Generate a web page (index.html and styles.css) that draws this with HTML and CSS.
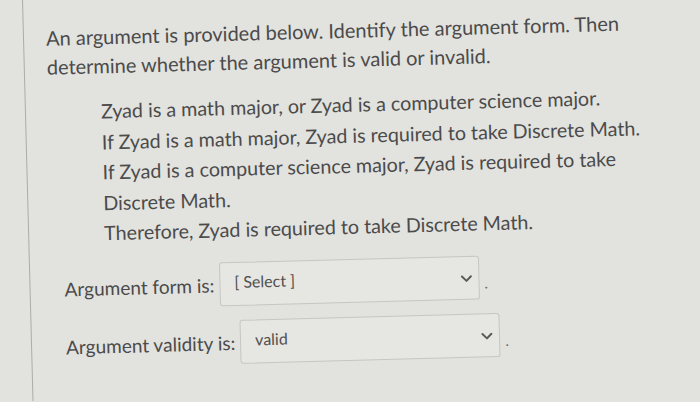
FILE: index.html
```html
<!DOCTYPE html>
<html>
<head>
<meta charset="utf-8">
<link rel="stylesheet" href="styles.css">
</head>
<body>
<div class="screen">
  <div class="sheet">
    <p class="intro">An argument is provided below. Identify the argument form. Then determine whether the argument is valid or invalid.</p>
    <div class="premises">
      <div>Zyad is a math major, or Zyad is a computer science major.</div>
      <div>If Zyad is a math major, Zyad is required to take Discrete Math.</div>
      <div>If Zyad is a computer science major, Zyad is required to take Discrete Math.</div>
      <div>Therefore, Zyad is required to take Discrete Math.</div>
    </div>
    <div class="row row-form">
      <span class="label">Argument form is:</span>
      <div class="select">
        <span class="value">[ Select ]</span>
        <svg class="chev" width="12" height="8" viewBox="0 0 12 8"><polyline points="1.5,1.5 6,6 10.5,1.5" fill="none" stroke="#5a5a5a" stroke-width="2" stroke-linecap="round" stroke-linejoin="round"/></svg>
      </div>
      <span class="dot">.</span>
    </div>
    <div class="row row-valid">
      <span class="label">Argument validity is:</span>
      <div class="select">
        <span class="value">valid</span>
        <svg class="chev" width="12" height="8" viewBox="0 0 12 8"><polyline points="1.5,1.5 6,6 10.5,1.5" fill="none" stroke="#5a5a5a" stroke-width="2" stroke-linecap="round" stroke-linejoin="round"/></svg>
      </div>
      <span class="dot">.</span>
    </div>
  </div>
</div>
</body>
</html>
```
FILE: styles.css
```css
html, body {
  margin: 0;
  padding: 0;
  background: #e2e2de;
  overflow: hidden;
}
body {
  font-family: Lato, "Open Sans", sans-serif;
  color: #4b4b4b;
}
.screen {
  width: 688px;
  height: 402px;
  overflow: hidden;
  transform: rotate(-1.5deg);
  transform-origin: 0 0;
  background: #e2e2de;
}
.sheet {
  margin-left: 22px;
  height: 100%;
  border-left: 1px solid #acaca8;
  padding: 25px 0 0 22px;
  box-sizing: border-box;
}
.intro {
  margin: 0;
  width: 610px;
  font-size: 20px;
  line-height: 29px;
}
.premises {
  margin-top: 16px;
  padding-left: 53px;
  width: 560px;
  font-size: 19.7px;
  line-height: 30.5px;
}
.row {
  display: flex;
  align-items: flex-start;
  padding-left: 12px;
  font-size: 19px;
  line-height: 29px;
}
.row-form {
  margin-top: 16px;
}
.row-valid {
  margin-top: 14px;
}
.label {
  margin-top: 8px;
  margin-right: 5px;
}
.select {
  width: 260px;
  height: 44px;
  box-sizing: border-box;
  border: 1px solid #c6c6c2;
  border-radius: 3px;
  background: #e6e6e2;
  display: flex;
  align-items: flex-start;
  justify-content: space-between;
  padding: 9px 6px 0 14px;
}
.value {
  font-size: 16px;
  line-height: 20px;
  color: #505050;
}
.chev {
  margin-top: 9px;
}
.dot {
  margin-left: 5px;
  margin-top: 13px;
  font-size: 15px;
  color: #6a6a6a;
}
```
